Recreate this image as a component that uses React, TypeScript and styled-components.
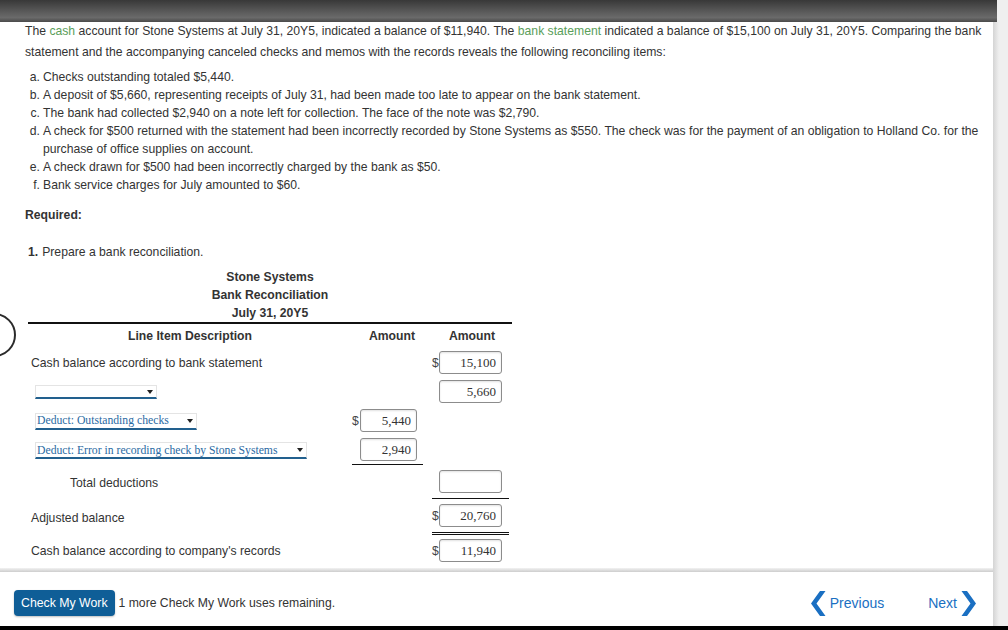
import React from "react";
import styled, { createGlobalStyle } from "styled-components";

const Global = createGlobalStyle`
  html, body { margin: 0; padding: 0; }
  body {
    background: #efefef;
    font-family: "Liberation Sans", Arial, sans-serif;
    font-size: 12.2px;
    color: #333;
  }
`;

const Shell = styled.div`
  position: relative;
  width: 1008px;
  height: 630px;
  display: flex;
  flex-direction: column;
  overflow: hidden;
  background: #efefef;
`;

const TopBar = styled.div`
  width: 997px;
  height: 22px;
  flex: none;
  background: linear-gradient(#383838, #555 45%, #6a6a6a 80%, #4a4a4a);
`;

const Middle = styled.div`
  flex: 1;
  display: flex;
  min-height: 0;
`;

const Main = styled.div`
  width: 993px;
  flex: none;
  background: #fff;
  display: flex;
  flex-direction: column;
`;

const Gutter = styled.div`
  flex: 1;
  background: linear-gradient(to right, #d4d4d4, #e6e6e6 4px, #efefef 6px);
`;

const Content = styled.div`
  flex: 1;
  padding: 0 10px 0 25px;
`;

const Intro = styled.p`
  margin: -1px 0 0;
  line-height: 21px;
`;

const Term = styled.span`
  color: #5a9e5a;
`;

const Items = styled.ol`
  list-style: none;
  margin: 5px 0 0;
  padding: 0 0 0 3px;
  line-height: 18px;
`;

const Item = styled.li`
  display: grid;
  grid-template-columns: 15px 1fr;
`;

const Marker = styled.span`
  text-align: right;
  padding-right: 3px;
`;

const Required = styled.div`
  margin-top: 12px;
  line-height: 18px;
  font-weight: bold;
`;

const Step = styled.div`
  margin-top: 19px;
  padding-left: 3px;
  line-height: 18px;
  display: flex;
  gap: 4px;
`;

const StepNo = styled.span`
  font-weight: bold;
`;

const Sheet = styled.div`
  margin-left: 3px;
  width: 484px;
`;

const Caption = styled.div`
  margin-top: 7px;
  text-align: center;
  font-weight: bold;
  line-height: 18px;
`;

const Grid = styled.div`
  border-top: 2px solid #111;
`;

const Row = styled.div<{ $h: number }>`
  display: grid;
  grid-template-columns: 324px 80px 80px;
  height: ${(p) => p.$h}px;
`;

const HeadCell = styled.div`
  display: flex;
  align-items: center;
  justify-content: center;
  font-weight: bold;
`;

const Label = styled.div<{ $indent?: number }>`
  display: flex;
  align-items: center;
  padding-left: ${(p) => p.$indent ?? 3}px;
  padding-top: 1px;
`;

const Slot = styled.div`
  display: flex;
  align-items: stretch;
`;

const Figure = styled.div<{ $w: number; $rule?: "single" | "double" }>`
  width: ${(p) => p.$w}px;
  display: flex;
  align-items: center;
  box-sizing: border-box;
  border-bottom: ${(p) =>
    p.$rule === "double" ? "3px double #111" : p.$rule === "single" ? "1px solid #111" : "none"};
`;

const Dollar = styled.span<{ $w: number }>`
  width: ${(p) => p.$w}px;
  flex: none;
  color: #444;
`;

const Entry = styled.div<{ $w: number }>`
  width: ${(p) => p.$w}px;
  height: 23px;
  box-sizing: border-box;
  border: 1px solid #8c8c8c;
  border-radius: 3px;
  box-shadow: inset 0 1px 2px rgba(0, 0, 0, 0.12);
  display: flex;
  align-items: center;
  justify-content: flex-end;
  padding-right: 5px;
  font-family: "Liberation Serif", "Times New Roman", serif;
  font-size: 13px;
  color: #333;
`;

const Picker = styled.div<{ $w: number; $h: number }>`
  width: ${(p) => p.$w}px;
  height: ${(p) => p.$h}px;
  box-sizing: border-box;
  margin-left: 7px;
  border: 1px solid #e4e4e4;
  border-bottom: 2px solid #22608e;
  background: #fff;
  display: flex;
  align-items: center;
  justify-content: space-between;
  padding: 0 3px 0 1px;
  font-family: "Liberation Serif", "Times New Roman", serif;
  font-size: 11.7px;
  line-height: 13px;
  color: #2a6aa3;
  white-space: nowrap;
`;

const Caret = styled.span`
  width: 0;
  height: 0;
  border-left: 3.5px solid transparent;
  border-right: 3.5px solid transparent;
  border-top: 4px solid #222;
`;

const Ring = styled.div`
  position: absolute;
  left: -28px;
  top: 313px;
  width: 44px;
  height: 44px;
  box-sizing: border-box;
  border: 2.5px solid #2b2b2b;
  border-radius: 50%;
`;

const Rule = styled.div`
  height: 4px;
  flex: none;
  background: linear-gradient(#f2f2f2, #cdcdcd);
`;

const Footer = styled.div`
  height: 54px;
  flex: none;
  display: flex;
  align-items: center;
  padding: 8px 16px 0 14px;
  box-sizing: border-box;
`;

const CheckButton = styled.button`
  height: 26px;
  padding: 0 7px;
  border: none;
  border-radius: 4px;
  background: #0f5e97;
  color: #fff;
  font-family: "Liberation Sans", Arial, sans-serif;
  font-size: 12.3px;
  box-shadow: 0 1px 2px rgba(0, 0, 0, 0.25);
`;

const Remaining = styled.span`
  margin-left: 4px;
  color: #333;
`;

const Nav = styled.div`
  margin-left: auto;
  display: flex;
  align-items: center;
  gap: 44px;
`;

const NavLink = styled.a`
  display: flex;
  align-items: center;
  gap: 4px;
  color: #1a6fc2;
  font-size: 14px;
  text-decoration: none;
`;

const BottomBar = styled.div`
  height: 4px;
  flex: none;
  background: #000;
`;

const Chevron = ({ dir }: { dir: "left" | "right" }) => (
  <svg width="16" height="25" viewBox="0 0 16 25">
    <polygon
      fill="#1a6fc2"
      points={
        dir === "left"
          ? "10,0 15.5,0 6.5,12.5 15.5,25 10,25 1,12.5"
          : "6,0 0.5,0 9.5,12.5 0.5,25 6,25 15,12.5"
      }
    />
  </svg>
);

type Amt = { value?: string; dollar?: boolean; rule?: "single" | "double" };

const First = ({ value, dollar, rule }: Amt) => (
  <Slot>
    <Figure $w={71} $rule={rule}>
      <Dollar $w={8}>{dollar ? "$" : ""}</Dollar>
      <Entry $w={57}>{value}</Entry>
    </Figure>
  </Slot>
);

const Second = ({ value, dollar, rule }: Amt) => (
  <Slot>
    <Figure $w={77} $rule={rule}>
      <Dollar $w={7}>{dollar ? "$" : ""}</Dollar>
      <Entry $w={63}>{value}</Entry>
    </Figure>
  </Slot>
);

export default function App() {
  return (
    <Shell>
      <Global />
      <TopBar />
      <Middle>
        <Main>
          <Content>
            <Intro>
              The <Term>cash</Term> account for Stone Systems at July 31, 20Y5, indicated a balance of $11,940. The{" "}
              <Term>bank statement</Term> indicated a balance of $15,100 on July 31, 20Y5. Comparing the bank
              statement and the accompanying canceled checks and memos with the records reveals the following
              reconciling items:
            </Intro>
            <Items>
              <Item><Marker>a.</Marker><span>Checks outstanding totaled $5,440.</span></Item>
              <Item><Marker>b.</Marker><span>A deposit of $5,660, representing receipts of July 31, had been made too late to appear on the bank statement.</span></Item>
              <Item><Marker>c.</Marker><span>The bank had collected $2,940 on a note left for collection. The face of the note was $2,790.</span></Item>
              <Item><Marker>d.</Marker><span>A check for $500 returned with the statement had been incorrectly recorded by Stone Systems as $550. The check was for the payment of an obligation to Holland Co. for the purchase of office supplies on account.</span></Item>
              <Item><Marker>e.</Marker><span>A check drawn for $500 had been incorrectly charged by the bank as $50.</span></Item>
              <Item><Marker>f.</Marker><span>Bank service charges for July amounted to $60.</span></Item>
            </Items>
            <Required>Required:</Required>
            <Step>
              <StepNo>1.</StepNo>
              <span>Prepare a bank reconciliation.</span>
            </Step>
            <Sheet>
              <Caption>
                Stone Systems
                <br />
                Bank Reconciliation
                <br />
                July 31, 20Y5
              </Caption>
              <Grid>
                <Row $h={24}>
                  <HeadCell>Line Item Description</HeadCell>
                  <HeadCell>Amount</HeadCell>
                  <HeadCell>Amount</HeadCell>
                </Row>
                <Row $h={29}>
                  <Label>Cash balance according to bank statement</Label>
                  <Slot />
                  <Second dollar value="15,100" />
                </Row>
                <Row $h={29}>
                  <Label $indent={0}>
                    <Picker $w={122} $h={14}>
                      <span />
                      <Caret />
                    </Picker>
                  </Label>
                  <Slot />
                  <Second value="5,660" />
                </Row>
                <Row $h={29}>
                  <Label $indent={0}>
                    <Picker $w={162} $h={17}>
                      <span>Deduct: Outstanding checks</span>
                      <Caret />
                    </Picker>
                  </Label>
                  <First dollar value="5,440" />
                  <Slot />
                </Row>
                <Row $h={30}>
                  <Label $indent={0}>
                    <Picker $w={272} $h={17}>
                      <span>Deduct: Error in recording check by Stone Systems</span>
                      <Caret />
                    </Picker>
                  </Label>
                  <First value="2,940" rule="single" />
                  <Slot />
                </Row>
                <Row $h={34}>
                  <Label $indent={42}>Total deductions</Label>
                  <Slot />
                  <Second rule="single" />
                </Row>
                <Row $h={36}>
                  <Label>Adjusted balance</Label>
                  <Slot />
                  <Second dollar value="20,760" rule="double" />
                </Row>
                <Row $h={31}>
                  <Label>Cash balance according to company's records</Label>
                  <Slot />
                  <Second dollar value="11,940" />
                </Row>
              </Grid>
            </Sheet>
          </Content>
          <Rule />
          <Footer>
            <CheckButton>Check My Work</CheckButton>
            <Remaining>1 more Check My Work uses remaining.</Remaining>
            <Nav>
              <NavLink href="#">
                <Chevron dir="left" />
                Previous
              </NavLink>
              <NavLink href="#">
                Next
                <Chevron dir="right" />
              </NavLink>
            </Nav>
          </Footer>
        </Main>
        <Gutter />
      </Middle>
      <BottomBar />
      <Ring />
    </Shell>
  );
}
